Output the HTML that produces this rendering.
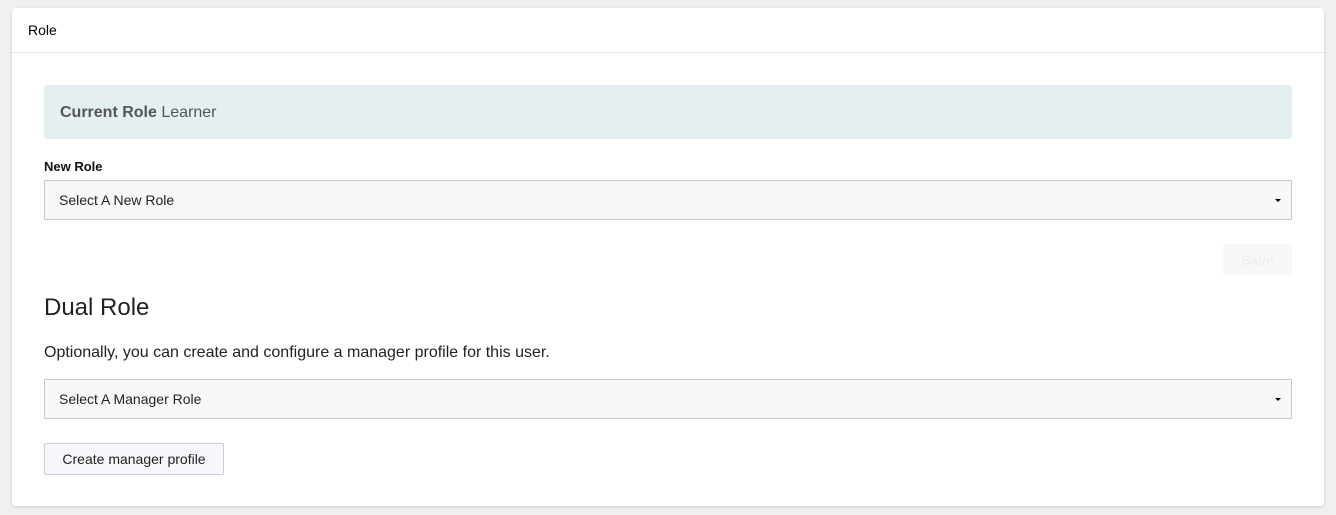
<!DOCTYPE html>
<html><head><style>
body{margin:0;background:#eef0f2;width:1336px;height:515px;overflow:hidden;font-family:"Liberation Sans",sans-serif;color:#222;}
.card{position:absolute;left:12px;top:8px;width:1312px;height:498px;background:#fff;border-radius:4px;box-shadow:0 1px 3px rgba(0,0,0,.15);}
.hdr{height:44px;border-bottom:1px solid #e5e7ea;font-size:14px;line-height:44px;padding-left:16px;color:#000;}
.abs{position:absolute;}
.alert{left:32px;top:77px;width:1248px;height:54px;background:#e5eef1;border-radius:4px;font-size:16px;line-height:56px;color:#555;}
.sel{left:32px;width:1246px;height:38px;background:#f8f8f8;border:1px solid #c8c8c8;font-size:14px;line-height:38px;color:#222;}
.caret{position:absolute;right:10px;top:18px;width:0;height:0;border-left:3px solid transparent;border-right:3px solid transparent;border-top:3px solid #000;}
</style></head><body>
<div class="card">
<div class="hdr">Role</div>
<div class="abs alert"><span style="padding-left:16px;font-weight:bold">Current Role</span> Learner</div>
<div class="abs" style="left:32px;top:151px;font-size:13px;font-weight:bold;color:#111">New Role</div>
<div class="abs sel" style="top:172px"><span style="padding-left:14px">Select A New Role</span><div class="caret"></div></div>
<div class="abs" style="left:1211px;top:236px;width:69px;height:31px;background:#f7f8f8;border-radius:3px;color:#eee;font-size:14px;font-weight:bold;text-align:center;line-height:32px">Save</div>
<div class="abs" style="left:32px;top:286px;font-size:24px;color:#222">Dual Role</div>
<div class="abs" style="left:32px;top:336px;font-size:16px;color:#222">Optionally, you can create and configure a manager profile for this user.</div>
<div class="abs sel" style="top:371px"><span style="padding-left:14px">Select A Manager Role</span><div class="caret"></div></div>
<div class="abs" style="left:32px;top:435px;width:178px;height:30px;background:#f6f7fa;border:1px solid #ccd;border-radius:2px;font-size:14px;line-height:30px;text-align:center;color:#222">Create manager profile</div>
</div>
</body></html>
